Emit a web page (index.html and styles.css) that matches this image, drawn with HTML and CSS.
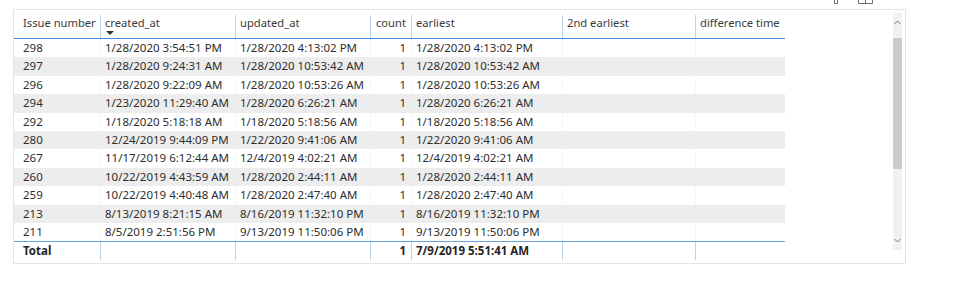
FILE: index.html
```html
<!DOCTYPE html>
<html>
<head>
<meta charset="utf-8">
<link rel="stylesheet" href="styles.css">
</head>
<body>
<div class="page">
  <div class="toolbar">
    <svg class="ico-filter" width="8" height="5" viewBox="0 0 8 5"><path d="M2.5 0 V3.5 H5.5 V0" fill="none" stroke="#6b6b6b" stroke-width="1"/></svg>
    <svg class="ico-focus" width="15" height="5" viewBox="0 0 15 5"><path d="M0.5 0 V3.5 H14.5 V0 M7.5 0 V3.5" fill="none" stroke="#6b6b6b" stroke-width="1"/></svg>
  </div>
  <div class="visual">
    <div class="table">
      <div class="row head">
        <div class="c c1">Issue number</div>
        <div class="c">created_at<span class="sort"></span></div>
        <div class="c">updated_at</div>
        <div class="c num">count</div>
        <div class="c">earliest</div>
        <div class="c">2nd earliest</div>
        <div class="c">difference time</div>
      </div>
      <div class="body">
        <div class="row"><div class="c c1">298</div><div class="c">1/28/2020 3:54:51 PM</div><div class="c">1/28/2020 4:13:02 PM</div><div class="c num">1</div><div class="c">1/28/2020 4:13:02 PM</div><div class="c"></div><div class="c"></div></div>
        <div class="row alt"><div class="c c1">297</div><div class="c">1/28/2020 9:24:31 AM</div><div class="c">1/28/2020 10:53:42 AM</div><div class="c num">1</div><div class="c">1/28/2020 10:53:42 AM</div><div class="c"></div><div class="c"></div></div>
        <div class="row"><div class="c c1">296</div><div class="c">1/28/2020 9:22:09 AM</div><div class="c">1/28/2020 10:53:26 AM</div><div class="c num">1</div><div class="c">1/28/2020 10:53:26 AM</div><div class="c"></div><div class="c"></div></div>
        <div class="row alt"><div class="c c1">294</div><div class="c">1/23/2020 11:29:40 AM</div><div class="c">1/28/2020 6:26:21 AM</div><div class="c num">1</div><div class="c">1/28/2020 6:26:21 AM</div><div class="c"></div><div class="c"></div></div>
        <div class="row"><div class="c c1">292</div><div class="c">1/18/2020 5:18:18 AM</div><div class="c">1/18/2020 5:18:56 AM</div><div class="c num">1</div><div class="c">1/18/2020 5:18:56 AM</div><div class="c"></div><div class="c"></div></div>
        <div class="row alt"><div class="c c1">280</div><div class="c">12/24/2019 9:44:09 PM</div><div class="c">1/22/2020 9:41:06 AM</div><div class="c num">1</div><div class="c">1/22/2020 9:41:06 AM</div><div class="c"></div><div class="c"></div></div>
        <div class="row"><div class="c c1">267</div><div class="c">11/17/2019 6:12:44 AM</div><div class="c">12/4/2019 4:02:21 AM</div><div class="c num">1</div><div class="c">12/4/2019 4:02:21 AM</div><div class="c"></div><div class="c"></div></div>
        <div class="row alt"><div class="c c1">260</div><div class="c">10/22/2019 4:43:59 AM</div><div class="c">1/28/2020 2:44:11 AM</div><div class="c num">1</div><div class="c">1/28/2020 2:44:11 AM</div><div class="c"></div><div class="c"></div></div>
        <div class="row"><div class="c c1">259</div><div class="c">10/22/2019 4:40:48 AM</div><div class="c">1/28/2020 2:47:40 AM</div><div class="c num">1</div><div class="c">1/28/2020 2:47:40 AM</div><div class="c"></div><div class="c"></div></div>
        <div class="row alt"><div class="c c1">213</div><div class="c">8/13/2019 8:21:15 AM</div><div class="c">8/16/2019 11:32:10 PM</div><div class="c num">1</div><div class="c">8/16/2019 11:32:10 PM</div><div class="c"></div><div class="c"></div></div>
        <div class="row"><div class="c c1">211</div><div class="c">8/5/2019 2:51:56 PM</div><div class="c">9/13/2019 11:50:06 PM</div><div class="c num">1</div><div class="c">9/13/2019 11:50:06 PM</div><div class="c"></div><div class="c"></div></div>
      </div>
      <div class="row total">
        <div class="c c1">Total</div>
        <div class="c"></div>
        <div class="c"></div>
        <div class="c num">1</div>
        <div class="c">7/9/2019 5:51:41 AM</div>
        <div class="c"></div>
        <div class="c"></div>
      </div>
    </div>
    <div class="scrollbar">
      <div class="sb-up"><svg width="7" height="5" viewBox="0 0 7 5"><path d="M0.5 4 L3.5 1 L6.5 4" fill="none" stroke="#777" stroke-width="1"/></svg></div>
      <div class="sb-thumb"></div>
      <div class="sb-rest"></div>
      <div class="sb-down"><svg width="7" height="5" viewBox="0 0 7 5"><path d="M0.5 1 L3.5 4 L6.5 1" fill="none" stroke="#777" stroke-width="1"/></svg></div>
    </div>
  </div>
</div>
</body>
</html>
```
FILE: styles.css
```css
html, body {
  margin: 0;
  padding: 0;
  background: #ffffff;
}
.page {
  width: 963px;
  height: 282px;
  font-family: "Noto Sans", "Open Sans", sans-serif;
  font-size: 11.5px;
  color: #2e2e2e;
}
.toolbar {
  height: 9px;
  display: flex;
  align-items: flex-start;
  padding-left: 832px;
}
.ico-filter { display: block; }
.ico-focus { display: block; margin-left: 18px; }
.visual {
  margin-left: 13px;
  width: 893px;
  height: 255px;
  box-sizing: border-box;
  border: 1px solid #e4e4e4;
  display: flex;
}
.table {
  width: 771px;
  padding-top: 5px;
  display: flex;
  flex-direction: column;
}
.row {
  display: grid;
  grid-template-columns: 86px 135px 135px 41px 151px 133px 90px;
  height: 18.4px;
  line-height: 18px;
}
.c {
  white-space: nowrap;
  overflow: hidden;
  padding-left: 4px;
  border-left: 1px solid #f6f6f6;
}
.c.c1 {
  padding-left: 9px;
  border-left: none;
}
.c.num {
  text-align: right;
  padding-left: 0;
  padding-right: 5px;
}
.head {
  height: 23px;
  line-height: 16px;
  font-size: 11.2px;
  border-bottom: 1px solid #3c8ad8;
  color: #3a3a3a;
}
.head .c {
  border-left-color: #b9d4ee;
  position: relative;
}
.head .c.c1 { border-left: none; }
.sort {
  position: absolute;
  left: 5px;
  top: 16px;
  width: 0;
  height: 0;
  border-left: 4px solid transparent;
  border-right: 4px solid transparent;
  border-top: 4px solid #333;
}
.body {
  display: flex;
  flex-direction: column;
}
.alt {
  background: #ededed;
}
.alt .c { border-left-color: #ededed; }
.total {
  height: 18px;
  border-top: 1px solid #6ba3dc;
  font-weight: bold;
  color: #252525;
}
.total .c {
  border-left-color: #b9d4ee;
}
.total .c.c1 { border-left: none; }
.scrollbar {
  margin-left: auto;
  margin-right: 3px;
  margin-top: 3px;
  width: 9px;
  height: 237px;
  display: flex;
  flex-direction: column;
  background: #f1f1f1;
}
.sb-up {
  height: 25px;
  display: flex;
  justify-content: center;
  padding-top: 7px;
  box-sizing: border-box;
}
.sb-thumb {
  height: 131px;
  background: #cbcbcb;
}
.sb-rest { flex: 1; }
.sb-down {
  height: 14px;
  display: flex;
  justify-content: center;
  align-items: flex-start;
  padding-top: 2px;
  box-sizing: border-box;
}
```
